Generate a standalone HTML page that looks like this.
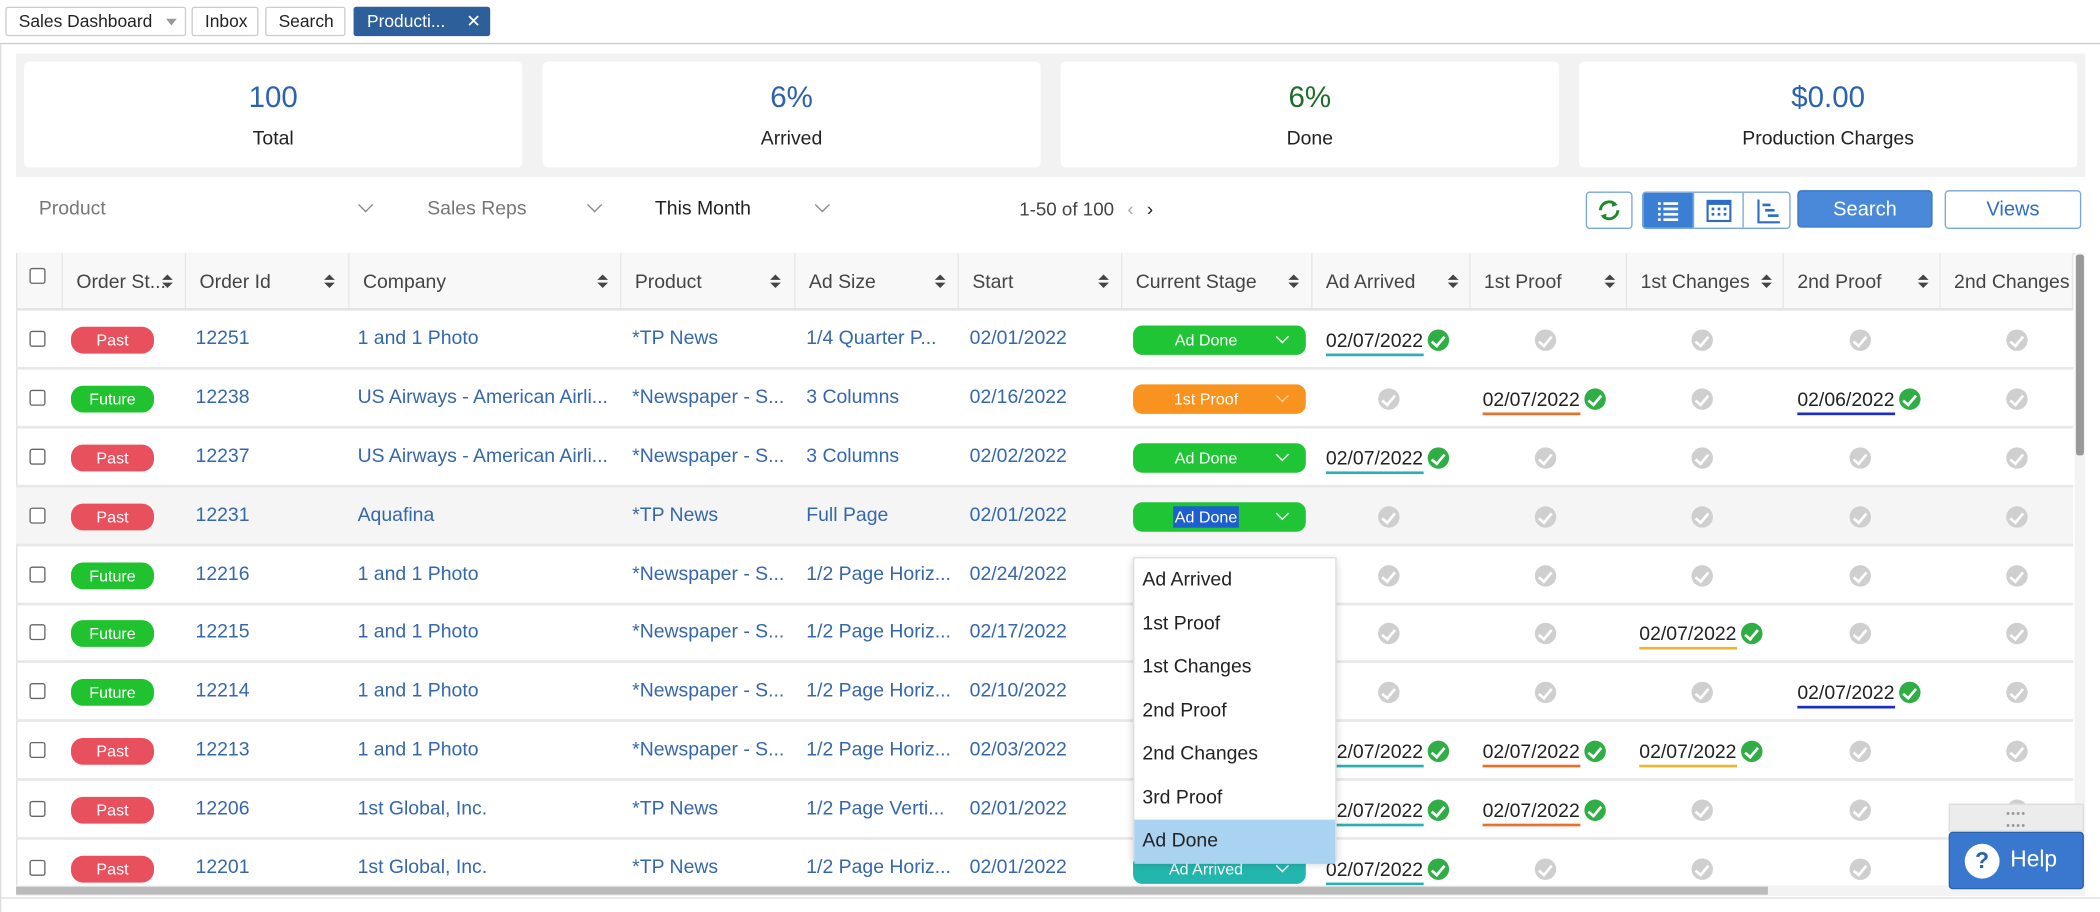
<!DOCTYPE html>
<html><head><meta charset="utf-8">
<style>
*{box-sizing:border-box;margin:0;padding:0}
html,body{width:2100px;height:912px;overflow:hidden;background:#fff}
#w{position:absolute;left:0;top:0;width:1568px;height:681px;transform:scale(1.33929);transform-origin:0 0;font-family:"Liberation Sans",Arial,sans-serif;color:#333}
.a{position:absolute}
.tab{position:absolute;top:5px;height:22px;border:1px solid #ccc;border-radius:2px;background:#fff;font-size:13px;line-height:20px;padding-left:9px;color:#222}
.card{position:absolute;top:46px;height:79px;width:372px;background:#fff;border-radius:4px;text-align:center}
.card .n{position:absolute;top:14px;width:100%;font-size:22px;color:#2a62ad}
.card .l{position:absolute;top:50px;width:100%;font-size:14.5px;color:#222}
.chev{position:absolute;width:8px;height:8px;border-right:1.3px solid #888;border-bottom:1.3px solid #888;transform:rotate(45deg)}
.hd{position:absolute;top:189px;height:42px;line-height:44px;font-size:14.5px;color:#444;background:#f8f8f8;border-right:1px solid #e6e6e6;padding-left:10px;white-space:nowrap;overflow:hidden}
.srt{position:absolute;top:16px;width:0;height:0}
.srt:before{content:"";position:absolute;left:0;top:0;border-left:4px solid transparent;border-right:4px solid transparent;border-bottom:4px solid #444}
.srt:after{content:"";position:absolute;left:0;top:6px;border-left:4px solid transparent;border-right:4px solid transparent;border-top:4px solid #444}
.row{position:absolute;left:12px;width:1536px;height:44px;border-bottom:2px solid #e8e8e8;font-size:14.5px;line-height:42px}
.row>*{position:absolute}
.cb{left:10px;top:15px;width:12px;height:12px;border:1px solid #666;border-radius:2px;background:#fff}
.bd{left:41px;top:12px;width:62px;height:20px;border-radius:9px;color:#fff;font-size:12px;line-height:20px;text-align:center}
.past{background:#e9505e}.fut{background:#20c22f}
.lk{color:#3567ad;white-space:nowrap}
.st{left:834px;top:11px;width:129px;height:22px;border-radius:7px;color:#fff;font-size:12px;line-height:22px;padding-left:0;text-indent:-20px;text-align:center}
.st i{position:absolute;right:14px;top:5px;width:7px;height:7px;border-right:1.3px solid #fff;border-bottom:1.3px solid #fff;transform:rotate(45deg)}
.ck{display:inline-block;width:16px;height:16px;border-radius:50%;background:#cfcfcf;position:absolute;top:14px}
.ck:after{content:"";position:absolute;left:5px;top:2.5px;width:4px;height:7.5px;border-right:2px solid #fff;border-bottom:2px solid #fff;transform:rotate(40deg)}
.dt{color:#222;white-space:nowrap;line-height:20px;top:11px}
.dt u{text-decoration:none;border-bottom:2px solid;padding-bottom:1px}
.dt .ck{position:relative;top:3px;margin-left:3px;background:#2eae44}
.dd{position:absolute;left:846px;top:416px;width:152px;height:227px;background:#fff;border:1px solid #ddd;box-shadow:0 2px 6px rgba(0,0,0,.2);font-size:14.5px;color:#222}
.dd div{height:32.5px;line-height:32px;padding-left:6px}
</style></head><body><div id="w">
<div class="tab" style="left:4px;width:135px">Sales Dashboard <span style="position:absolute;right:6px;top:8px;border-left:4px solid transparent;border-right:4px solid transparent;border-top:5px solid #999"></span></div>
<div class="tab" style="left:143px;width:50px">Inbox</div>
<div class="tab" style="left:198px;width:60px">Search</div>
<div class="tab" style="left:264px;width:102px;background:#2d5f9a;border-color:#2d5f9a;color:#fff">Producti... <span style="position:absolute;right:6px;top:0">✕</span></div>
<div class="a" style="left:0;top:32px;width:1568px;height:1px;background:#ccc"></div>
<div class="a" style="left:0;top:33px;width:1px;height:648px;background:#ddd"></div>
<div class="a" style="left:12px;top:40px;width:1545px;height:92px;background:#f2f2f2"></div>
<div class="card" style="left:18px"><div class="n">100</div><div class="l">Total</div></div>
<div class="card" style="left:405px"><div class="n">6%</div><div class="l">Arrived</div></div>
<div class="card" style="left:792px"><div class="n" style="color:#1f6e2c">6%</div><div class="l">Done</div></div>
<div class="card" style="left:1179px"><div class="n">$0.00</div><div class="l">Production Charges</div></div>

<div class="a" style="left:29px;top:148px;font-size:14.5px;color:#777">Product</div><div class="chev" style="left:269px;top:149px"></div>
<div class="a" style="left:319px;top:148px;font-size:14.5px;color:#777">Sales Reps</div><div class="chev" style="left:440px;top:149px"></div>
<div class="a" style="left:489px;top:148px;font-size:14.5px;color:#222">This Month</div><div class="chev" style="left:610px;top:149px"></div>
<div class="a" style="left:761px;top:148px;font-size:14px;color:#444">1-50 of 100 <span style="color:#aaa;margin-left:6px">‹</span> <span style="color:#222;margin-left:6px">›</span></div>

<div class="a" style="left:1184px;top:143px;width:35px;height:28px;border:1px solid #7aa6d8;border-radius:3px"><svg width="33" height="26" viewBox="0 0 33 26"><path d="M10 13a6.5 6.5 0 0 1 11-4.5" stroke="#1d8a2a" stroke-width="2.2" fill="none"/><path d="M19 6l4 3-4.5 1.5z" fill="#1d8a2a"/><path d="M23 13a6.5 6.5 0 0 1-11 4.5" stroke="#1d8a2a" stroke-width="2.2" fill="none"/><path d="M14 20l-4-3 4.5-1.5z" fill="#1d8a2a"/></svg></div>
<div class="a" style="left:1226px;top:143px;width:111px;height:28px;border:1px solid #7aa6d8;border-radius:3px;overflow:hidden">
<div class="a" style="left:0;top:0;width:37px;height:28px;background:#3b7fd5"><svg width="37" height="26"><g fill="#fff"><rect x="11" y="7" width="2" height="2"/><rect x="15" y="7" width="11" height="2"/><rect x="11" y="11" width="2" height="2"/><rect x="15" y="11" width="11" height="2"/><rect x="11" y="15" width="2" height="2"/><rect x="15" y="15" width="11" height="2"/><rect x="11" y="19" width="2" height="2"/><rect x="15" y="19" width="11" height="2"/></g></svg></div>
<div class="a" style="left:37px;top:0;width:1px;height:28px;background:#7aa6d8"></div>
<div class="a" style="left:38px;top:0"><svg width="37" height="26"><rect x="10" y="6" width="17" height="15" fill="none" stroke="#2d6ec4" stroke-width="1.6"/><rect x="10" y="6" width="17" height="3" fill="#2d6ec4"/><g fill="#2d6ec4"><rect x="13" y="11" width="2" height="2"/><rect x="17.5" y="11" width="2" height="2"/><rect x="22" y="11" width="2" height="2"/><rect x="13" y="15" width="2" height="2"/><rect x="17.5" y="15" width="2" height="2"/><rect x="22" y="15" width="2" height="2"/></g></svg></div>
<div class="a" style="left:74px;top:0;width:1px;height:28px;background:#7aa6d8"></div>
<div class="a" style="left:75px;top:0"><svg width="36" height="26"><path d="M11 5v17h16" fill="none" stroke="#2d6ec4" stroke-width="1.6"/><g fill="#2d6ec4"><rect x="14" y="8" width="6" height="2"/><rect x="16" y="12" width="7" height="2"/><rect x="18" y="16" width="8" height="2"/></g></svg></div>
</div>
<div class="a" style="left:1342px;top:142px;width:101px;height:28px;background:#4a88da;border:1px solid #3a76c4;border-radius:3px;color:#fff;font-size:15px;text-align:center;line-height:28px">Search</div>
<div class="a" style="left:1452px;top:142px;width:102px;height:29px;border:1px solid #7aa6d8;border-radius:3px;color:#2d6ec4;font-size:15px;text-align:center;line-height:28px">Views</div>

<div class="a" style="left:12px;top:189px;width:1537px;height:1px;background:#e0e0e0"></div>
<div class="a" style="left:12px;top:189px;width:1px;height:476px;background:#e0e0e0"></div>
<div class="hd" style="left:13px;width:34px"><span class="cb a" style="left:9px;top:11px;width:12px;height:12px;border:1px solid #666;border-radius:2px"></span></div>
<div class="hd" style="left:47px;width:92px">Order St...<span class="srt" style="left:74px"></span></div>
<div class="hd" style="left:139px;width:122px">Order Id<span class="srt" style="left:103px"></span></div>
<div class="hd" style="left:261px;width:203px">Company<span class="srt" style="left:185px"></span></div>
<div class="hd" style="left:464px;width:130px">Product<span class="srt" style="left:111px"></span></div>
<div class="hd" style="left:594px;width:122px">Ad Size<span class="srt" style="left:104px"></span></div>
<div class="hd" style="left:716px;width:122px">Start<span class="srt" style="left:104px"></span></div>
<div class="hd" style="left:838px;width:142px">Current Stage<span class="srt" style="left:124px"></span></div>
<div class="hd" style="left:980px;width:118px">Ad Arrived<span class="srt" style="left:101px"></span></div>
<div class="hd" style="left:1098px;width:117px">1st Proof<span class="srt" style="left:100px"></span></div>
<div class="hd" style="left:1215px;width:117px">1st Changes<span class="srt" style="left:100px"></span></div>
<div class="hd" style="left:1332px;width:117px">2nd Proof<span class="srt" style="left:100px"></span></div>
<div class="hd" style="left:1449px;width:99px">2nd Changes</div>
<div class="a" style="left:12px;top:230px;width:1536px;height:2px;background:#e4e4e4"></div>
<div class="a" style="left:1549px;top:189px;width:8px;height:476px;background:#f3f3f3"></div>
<div class="a" style="left:1550px;top:190px;width:6px;height:150px;background:#999;border-radius:2px"></div>

<div class="row" style="top:232px"><span class="cb"></span><span class="bd past">Past</span><span class="lk" style="left:134px">12251</span><span class="lk" style="left:255px">1 and 1 Photo</span><span class="lk" style="left:460px">*TP News</span><span class="lk" style="left:590px">1/4 Quarter P...</span><span class="lk" style="left:712px">02/01/2022</span><span class="st" style="background:#1fc535">Ad Done<i></i></span><span class="dt" style="left:978px"><u style="border-color:#2bb0b0">02/07/2022</u><span class="ck"></span></span><span class="ck" style="left:1134px"></span><span class="ck" style="left:1251px"></span><span class="ck" style="left:1369px"></span><span class="ck" style="left:1486px"></span></div>
<div class="row" style="top:276px"><span class="cb"></span><span class="bd fut">Future</span><span class="lk" style="left:134px">12238</span><span class="lk" style="left:255px">US Airways - American Airli...</span><span class="lk" style="left:460px">*Newspaper - S...</span><span class="lk" style="left:590px">3 Columns</span><span class="lk" style="left:712px">02/16/2022</span><span class="st" style="background:#f7931e">1st Proof<i style="opacity:.6"></i></span><span class="ck" style="left:1017px"></span><span class="dt" style="left:1095px"><u style="border-color:#e8702a">02/07/2022</u><span class="ck"></span></span><span class="ck" style="left:1251px"></span><span class="dt" style="left:1330px"><u style="border-color:#1b2fc4">02/06/2022</u><span class="ck"></span></span><span class="ck" style="left:1486px"></span></div>
<div class="row" style="top:320px"><span class="cb"></span><span class="bd past">Past</span><span class="lk" style="left:134px">12237</span><span class="lk" style="left:255px">US Airways - American Airli...</span><span class="lk" style="left:460px">*Newspaper - S...</span><span class="lk" style="left:590px">3 Columns</span><span class="lk" style="left:712px">02/02/2022</span><span class="st" style="background:#1fc535">Ad Done<i></i></span><span class="dt" style="left:978px"><u style="border-color:#2bb0b0">02/07/2022</u><span class="ck"></span></span><span class="ck" style="left:1134px"></span><span class="ck" style="left:1251px"></span><span class="ck" style="left:1369px"></span><span class="ck" style="left:1486px"></span></div>
<div class="row" style="top:364px;background:#f5f5f5"><span class="cb"></span><span class="bd past">Past</span><span class="lk" style="left:134px">12231</span><span class="lk" style="left:255px">Aquafina</span><span class="lk" style="left:460px">*TP News</span><span class="lk" style="left:590px">Full Page</span><span class="lk" style="left:712px">02/01/2022</span><span class="st" style="background:#1fc535"><span style="background:#1e5fd0;padding:1px 1px">Ad Done</span><i></i></span><span class="ck" style="left:1017px"></span><span class="ck" style="left:1134px"></span><span class="ck" style="left:1251px"></span><span class="ck" style="left:1369px"></span><span class="ck" style="left:1486px"></span></div>
<div class="row" style="top:408px"><span class="cb"></span><span class="bd fut">Future</span><span class="lk" style="left:134px">12216</span><span class="lk" style="left:255px">1 and 1 Photo</span><span class="lk" style="left:460px">*Newspaper - S...</span><span class="lk" style="left:590px">1/2 Page Horiz...</span><span class="lk" style="left:712px">02/24/2022</span><span class="ck" style="left:1017px"></span><span class="ck" style="left:1134px"></span><span class="ck" style="left:1251px"></span><span class="ck" style="left:1369px"></span><span class="ck" style="left:1486px"></span></div>
<div class="row" style="top:451px"><span class="cb"></span><span class="bd fut">Future</span><span class="lk" style="left:134px">12215</span><span class="lk" style="left:255px">1 and 1 Photo</span><span class="lk" style="left:460px">*Newspaper - S...</span><span class="lk" style="left:590px">1/2 Page Horiz...</span><span class="lk" style="left:712px">02/17/2022</span><span class="ck" style="left:1017px"></span><span class="ck" style="left:1134px"></span><span class="dt" style="left:1212px"><u style="border-color:#e8b630">02/07/2022</u><span class="ck"></span></span><span class="ck" style="left:1369px"></span><span class="ck" style="left:1486px"></span></div>
<div class="row" style="top:495px"><span class="cb"></span><span class="bd fut">Future</span><span class="lk" style="left:134px">12214</span><span class="lk" style="left:255px">1 and 1 Photo</span><span class="lk" style="left:460px">*Newspaper - S...</span><span class="lk" style="left:590px">1/2 Page Horiz...</span><span class="lk" style="left:712px">02/10/2022</span><span class="ck" style="left:1017px"></span><span class="ck" style="left:1134px"></span><span class="ck" style="left:1251px"></span><span class="dt" style="left:1330px"><u style="border-color:#1b2fc4">02/07/2022</u><span class="ck"></span></span><span class="ck" style="left:1486px"></span></div>
<div class="row" style="top:539px"><span class="cb"></span><span class="bd past">Past</span><span class="lk" style="left:134px">12213</span><span class="lk" style="left:255px">1 and 1 Photo</span><span class="lk" style="left:460px">*Newspaper - S...</span><span class="lk" style="left:590px">1/2 Page Horiz...</span><span class="lk" style="left:712px">02/03/2022</span><span class="dt" style="left:978px"><u style="border-color:#2bb0b0">02/07/2022</u><span class="ck"></span></span><span class="dt" style="left:1095px"><u style="border-color:#e8702a">02/07/2022</u><span class="ck"></span></span><span class="dt" style="left:1212px"><u style="border-color:#e8b630">02/07/2022</u><span class="ck"></span></span><span class="ck" style="left:1369px"></span><span class="ck" style="left:1486px"></span></div>
<div class="row" style="top:583px"><span class="cb"></span><span class="bd past">Past</span><span class="lk" style="left:134px">12206</span><span class="lk" style="left:255px">1st Global, Inc.</span><span class="lk" style="left:460px">*TP News</span><span class="lk" style="left:590px">1/2 Page Verti...</span><span class="lk" style="left:712px">02/01/2022</span><span class="dt" style="left:978px"><u style="border-color:#2bb0b0">02/07/2022</u><span class="ck"></span></span><span class="dt" style="left:1095px"><u style="border-color:#e8702a">02/07/2022</u><span class="ck"></span></span><span class="ck" style="left:1251px"></span><span class="ck" style="left:1369px"></span><span class="ck" style="left:1486px"></span></div>
<div class="row" style="top:627px;border-bottom:none"><span class="cb"></span><span class="bd past">Past</span><span class="lk" style="left:134px">12201</span><span class="lk" style="left:255px">1st Global, Inc.</span><span class="lk" style="left:460px">*TP News</span><span class="lk" style="left:590px">1/2 Page Horiz...</span><span class="lk" style="left:712px">02/01/2022</span><span class="st" style="background:#22b6ae">Ad Arrived<i></i></span><span class="dt" style="left:978px"><u style="border-color:#2bb0b0">02/07/2022</u><span class="ck"></span></span><span class="ck" style="left:1134px"></span><span class="ck" style="left:1251px"></span><span class="ck" style="left:1369px"></span><span class="ck" style="left:1486px"></span></div>

<div class="a" style="left:12px;top:661px;width:1545px;height:8px;background:#f3f3f3"></div>
<div class="a" style="left:12px;top:662px;width:1308px;height:6px;background:#bbb"></div>
<div class="a" style="left:0;top:670px;width:1568px;height:1px;background:#ddd"></div>

<div class="dd"><div>Ad Arrived</div><div>1st Proof</div><div>1st Changes</div><div>2nd Proof</div><div>2nd Changes</div><div>3rd Proof</div><div style="background:#a9d3f0">Ad Done</div></div>

<div class="a" style="left:1455px;top:600px;width:101px;height:21px;background:#ececec;border:1px solid #ddd;text-align:center;color:#999;font-size:8px;line-height:9px;padding-top:2px;letter-spacing:1px">••••<br>••••</div>
<div class="a" style="left:1455px;top:621px;width:101px;height:43px;background:#3a78d0;border:1px solid #2a60b0;border-radius:3px"><div class="a" style="left:11px;top:8px;width:26px;height:26px;border-radius:50%;background:#fff;color:#2a60b0;font-weight:bold;font-size:17px;text-align:center;line-height:26px">?</div><div class="a" style="left:45px;top:10px;color:#fff;font-size:17px">Help</div></div>
</div></body></html>
